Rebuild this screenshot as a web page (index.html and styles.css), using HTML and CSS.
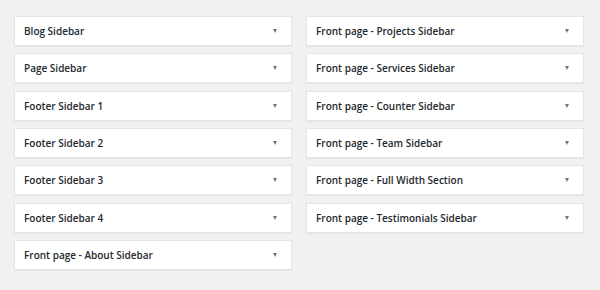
FILE: index.html
```html
<html>
    <head>
        <meta charset="utf-8" />
        <title>Widgets</title>
        <link rel="stylesheet" href="styles.css">
    </head>
    <body>
        <div class="widgets">
            <div class="column">
                <div class="sidebar"><span>Blog Sidebar</span><i class="arrow"></i></div>
                <div class="sidebar"><span>Page Sidebar</span><i class="arrow"></i></div>
                <div class="sidebar"><span>Footer Sidebar 1</span><i class="arrow"></i></div>
                <div class="sidebar"><span>Footer Sidebar 2</span><i class="arrow"></i></div>
                <div class="sidebar"><span>Footer Sidebar 3</span><i class="arrow"></i></div>
                <div class="sidebar"><span>Footer Sidebar 4</span><i class="arrow"></i></div>
                <div class="sidebar"><span>Front page - About Sidebar</span><i class="arrow"></i></div>
            </div>
            <div class="column">
                <div class="sidebar"><span>Front page - Projects Sidebar</span><i class="arrow"></i></div>
                <div class="sidebar"><span>Front page - Services Sidebar</span><i class="arrow"></i></div>
                <div class="sidebar"><span>Front page - Counter Sidebar</span><i class="arrow"></i></div>
                <div class="sidebar"><span>Front page - Team Sidebar</span><i class="arrow"></i></div>
                <div class="sidebar"><span>Front page - Full Width Section</span><i class="arrow"></i></div>
                <div class="sidebar"><span>Front page - Testimonials Sidebar</span><i class="arrow"></i></div>
            </div>
        </div>
    </body>
</html>
```
FILE: styles.css
```css
body{
    margin: 0;
    background-color: #f1f1f1;
    font-family: "Open Sans", sans-serif;
}

.widgets{
    display: flex;
    gap: 14px;
    padding: 16px 0 0 14px;
}

.column{
    width: 278px;
    display: flex;
    flex-direction: column;
    gap: 7.33px;
}

.sidebar{
    height: 30px;
    box-sizing: border-box;
    background-color: #fff;
    border: 1px solid #e5e5e5;
    box-shadow: 0 1px 1px rgba(0,0,0,.04);
    display: flex;
    align-items: center;
    justify-content: space-between;
    padding: 0 14px 0 9px;
    color: #23282d;
    font-size: 10px;
    font-weight: 600;
}

.arrow{
    width: 0;
    height: 0;
    border-left: 2.5px solid transparent;
    border-right: 2.5px solid transparent;
    border-top: 4px solid #72777c;
}
```
